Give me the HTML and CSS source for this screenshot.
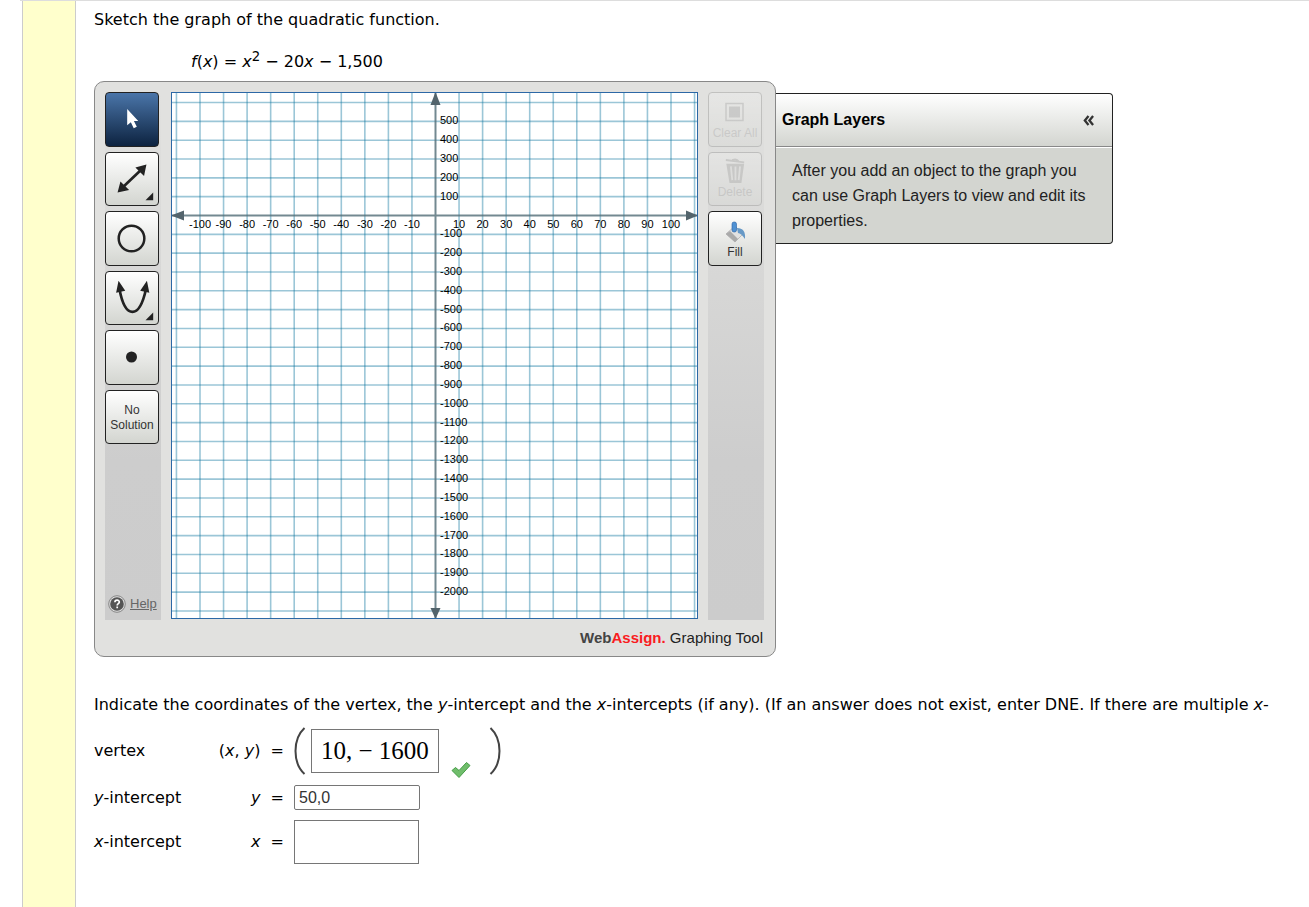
FILE: index.html
```
<!DOCTYPE html>
<html lang="en">
<head>
<meta charset="utf-8">
<title>Graphing question</title>
<link rel="stylesheet" href="styles.css">
</head>
<body>
<div class="page">
  <div class="margin-strip"></div>
  <main class="question">
    <p class="prompt">Sketch the graph of the quadratic function.</p>
    <p class="formula"><i>f</i>(<i>x</i>)&nbsp;=&nbsp;<i>x</i><sup>2</sup> − 20<i>x</i> − 1,500</p>

    <div class="workspace">
      <section class="tool">
        <div class="tool-main">
          <div class="rail">
            <div class="buttons buttons-left">
              <button class="btn btn-active" type="button" aria-label="Select">
                <svg viewBox="0 0 54 54"><path d="M22 16.500V33.500L25.800 30.300L28.800 36.600L32 35L29 29.200H33.500Z" fill="#fff"/></svg>
              </button>
              <button class="btn" type="button" aria-label="Line">
                <svg viewBox="0 0 54 54"><path d="M18 35L36 18" stroke="#222" stroke-width="2.800"/><path d="M12 41L15 29.500L24 38.500ZM42 12L30.500 15L39.500 24Z" fill="#222"/><path d="M49 41V49H41Z" fill="#222"/></svg>
              </button>
              <button class="btn" type="button" aria-label="Circle">
                <svg viewBox="0 0 54 54"><circle cx="26.500" cy="27.500" r="13.300" fill="none" stroke="#222" stroke-width="2.600"/></svg>
              </button>
              <button class="btn" type="button" aria-label="Parabola">
                <svg viewBox="0 0 54 54"><path d="M14 18C17 34 22 41.500 27.500 41.500S38 34 41.500 18" fill="none" stroke="#222" stroke-width="2.800"/><path d="M13 9L10.500 21.500L20 19.500ZM42.500 9L35.500 19.500L45 21.500Z" fill="#222"/><path d="M49 42V50H41Z" fill="#222"/></svg>
              </button>
              <button class="btn" type="button" aria-label="Point">
                <svg viewBox="0 0 54 54"><circle cx="26.500" cy="27" r="5.700" fill="#222"/></svg>
              </button>
              <button class="btn btn-text" type="button">No<br>Solution</button>
            </div>
            <a class="help" href="#help">
              <svg class="help-icon" viewBox="0 0 18 18"><circle cx="9" cy="9" r="8.300" fill="#ddd" stroke="#888"/><circle cx="9" cy="9" r="6.800" fill="#555"/><path d="M6.900 7.300C6.900 4.500 11.300 4.500 11.300 7.100C11.300 8.700 9.200 8.700 9.200 10.400M9.200 11.600V13.200" fill="none" stroke="#fff" stroke-width="1.700"/></svg>
              <span class="help-label">Help</span>
            </a>
          </div>
          <svg class="graph" id="graph" viewBox="0 0 527 527" role="img" aria-label="Coordinate grid"></svg>
          <div class="rail">
            <div class="buttons buttons-right">
              <button class="btn btn-stack" type="button" disabled>
                <svg class="small-icon" viewBox="0 0 24 24"><rect x="3" y="1.500" width="17" height="17" fill="none" stroke="#777" stroke-width="1.500"/><rect x="6" y="4.500" width="11" height="11" fill="#777"/></svg>
                Clear All
              </button>
              <button class="btn btn-stack" type="button" disabled>
                <svg class="bin-icon" viewBox="0 0 24 28"><path d="M2 2L22 4.500M9 2Q14 0 16 3.500" stroke="#777" stroke-width="2" fill="none"/><path d="M2.500 6H22L19 27H6Z" fill="#777"/><path d="M7.500 9L9 24M12.500 9V24M17.500 9L16 24" stroke="#ddd" stroke-width="2"/></svg>
                Delete
              </button>
              <button class="btn btn-stack" type="button">
                <svg class="small-icon" viewBox="0 0 24 24"><path d="M3 13L12 5L20 13L12 21Z" fill="#e2e2e2" stroke="#bbb"/><path d="M3 13L12 21L15 18L7 10Z" fill="#aaa"/><path d="M14 7Q23 7 22 18Q18 12 15 12Z" fill="#6799c6"/><rect x="9" y="1" width="4.500" height="10" rx="2" fill="#4f91d3" stroke="#2862a5" stroke-width=".6"/></svg>
                Fill
              </button>
            </div>
          </div>
        </div>
        <div class="brand"><b>Web<span class="brand-red">Assign.</span></b> Graphing Tool</div>
      </section>

      <aside class="layers">
        <header class="layers-head">
          <h2 class="layers-title">Graph Layers</h2>
          <button class="collapse" type="button" aria-label="Collapse">
            <svg class="collapse-icon" viewBox="0 0 12 12"><path d="M6 1L2 6L6 11M11 1L7 6L11 11" fill="none" stroke="#333" stroke-width="2.500"/></svg>
          </button>
        </header>
        <p class="layers-body">After you add an object to the graph you can use Graph Layers to view and edit its properties.</p>
      </aside>
    </div>

    <p class="instructions">Indicate the coordinates of the vertex, the <i>y</i>-intercept and the <i>x</i>-intercepts (if any). (If an answer does not exist, enter DNE. If there are multiple <i>x</i>-</p>

    <div class="answers">
      <label for="vertex">vertex</label>
      <span class="lhs">(<i>x</i>, <i>y</i>)&nbsp; =</span>
      <div class="vertex-answer">
        <svg class="paren" viewBox="0 0 12 48"><path d="M10.500 1C-1.500 12 -1.500 36 10.500 47" fill="none" stroke="#444" stroke-width="2"/></svg>
        <input class="field field-math" id="vertex" type="text" value="10, − 1600">
        <svg class="check" viewBox="0 0 20 16"><path d="M1 8.500L4.500 5.500L8 8.500L15.500 .5L19 3.500L8 15.500Z" fill="#70bd6b" stroke="#459c46"/></svg>
        <svg class="paren" viewBox="0 0 12 48"><path d="M1.500 1C13.500 12 13.500 36 1.500 47" fill="none" stroke="#444" stroke-width="2"/></svg>
      </div>

      <label for="yint"><i>y</i>-intercept</label>
      <span class="lhs"><i>y</i>&nbsp; =</span>
      <input class="field field-short" id="yint" type="text" value="50,0">

      <label for="xint"><i>x</i>-intercept</label>
      <span class="lhs"><i>x</i>&nbsp; =</span>
      <input class="field field-tall" id="xint" type="text">
    </div>
  </main>
</div>
<script src="graph.js"></script>
</body>
</html>
```
FILE: graph.js
```
const svg = document.getElementById("graph");
const NS = "http://www.w3.org/2000/svg";
const size = 527;
const origin = { x: 264.5, y: 123.5 };
const step = { x: 23.55, y: 18.83 };

function add(name, attrs, text) {
  const el = document.createElementNS(NS, name);
  for (const key in attrs) el.setAttribute(key, attrs[key]);
  if (text !== undefined) el.textContent = text;
  svg.appendChild(el);
}

for (let i = -11; i <= 11; i++) {
  const x = origin.x + i * step.x;
  if (i) add("path", { class: "grid", d: `M${x} 0V${size}` });
}
for (let j = -6; j <= 21; j++) {
  const y = origin.y + j * step.y;
  if (j) add("path", { class: "grid", d: `M0 ${y}H${size}` });
}

add("path", { class: "axis", d: `M0 ${origin.y}H${size}M${origin.x} 0V${size}` });
add("path", {
  class: "arrow",
  d: "M0 123.5L13 118.500V128.500ZM527 123.500L515 118.500V128.500ZM264.500 0L259.500 13H269.500ZM264.500 527L259.500 516H269.500Z"
});

for (let i = -10; i <= 10; i++) {
  if (i) add("text", { class: "tick tick-x", x: origin.x + i * step.x, y: 136 }, i * 10);
}
for (let j = -5; j <= 20; j++) {
  if (j) add("text", { class: "tick", x: 269, y: Math.floor(origin.y + j * step.y + 3.5) }, -j * 100);
}

add("rect", { class: "frame", x: 0.5, y: 0.5, width: size - 1, height: size - 1 });
```
FILE: styles.css
```
* { box-sizing: border-box; }

body {
  margin: 0;
  background: #fff;
  color: #000;
  font: 16px/20px Verdana, "DejaVu Sans", sans-serif;
  overflow: hidden;
}

p, h2 { margin: 0; }

.page {
  display: flex;
  min-height: 100vh;
  margin-left: 20px;
  padding-left: 2px;
  border-top: 1px solid #ddd;
}

.margin-strip {
  flex: none;
  width: 54px;
  background: #ffc;
  border: solid #ccc;
  border-width: 0 1px;
}

.question {
  flex: 1;
  min-width: 0;
  padding: 9px 0 0 18px;
}

.formula {
  margin: 22px 0 9px 97px;
}

.formula sup { line-height: 0; }

.workspace {
  display: flex;
  align-items: flex-start;
}

.tool {
  flex: none;
  padding: 10px 11px 0 10px;
  background: #e1e1df;
  border: 1px solid #888;
  border-radius: 10px;
}

.tool-main {
  display: flex;
  gap: 10px;
}

.rail {
  display: flex;
  flex-direction: column;
  justify-content: space-between;
  width: 56px;
  height: 528px;
  background: linear-gradient(#e1e1df, #cdcdcd 70%, #ccc);
}

.buttons {
  display: grid;
  grid-auto-rows: 1fr;
  gap: 5px;
  width: 54px;
}

.buttons-left { height: 352px; }
.buttons-right { height: 174px; }

.btn {
  padding: 0;
  min-height: 0;
  overflow: hidden;
  background: linear-gradient(#fff, #d3d5d0);
  border: 1px solid #222;
  border-radius: 4px;
  color: #333;
  font: 12px/15px "Liberation Sans", Arial, sans-serif;
}

.btn svg { display: block; width: 100%; }

.btn-active { background: linear-gradient(#4a75a9, #0d2340); }

.btn-text { padding-top: 2px; }

.btn-stack {
  display: flex;
  flex-direction: column;
  align-items: center;
  justify-content: flex-end;
  padding-bottom: 5px;
  white-space: nowrap;
}

.btn-stack .small-icon { width: 24px; height: 24px; }
.btn-stack .bin-icon { width: 22px; height: 28px; }

.btn:disabled {
  opacity: .2;
  color: #777;
  border-color: #444;
}

.help {
  display: flex;
  align-items: center;
  gap: 4px;
  padding: 0 0 7px 3px;
  color: #666;
  font: 13px/18px "Liberation Sans", Arial, sans-serif;
}

.help-icon { width: 18px; height: 18px; }

.graph {
  display: block;
  width: 527px;
  height: 527px;
  background: #fff;
}

.grid { stroke: #06719c; stroke-opacity: .4; stroke-width: 1.6px; }
.axis { stroke: #506b75; stroke-opacity: .8; stroke-width: 2px; }
.arrow { fill: #53646c; }
.frame { fill: none; stroke: #2c68a6; }
.tick { font: 11px "Liberation Sans", Arial, sans-serif; fill: #000; }
.tick-x { text-anchor: middle; }

.brand {
  padding: 8px 1px;
  color: #222;
  font: 15px/20px "Liberation Sans", Arial, sans-serif;
  text-align: right;
}

.brand b { color: #444; }
.brand .brand-red { color: #f91c22; }

.layers {
  width: 337px;
  margin-top: 12px;
  border: 1px solid #222;
  border-left: 0;
  border-radius: 0 4px 4px 0;
  background: #d3d5d0;
  font-family: "Liberation Sans", Arial, sans-serif;
}

.layers-head {
  display: flex;
  align-items: center;
  justify-content: space-between;
  height: 53px;
  padding: 0 17px 0 6px;
  background: linear-gradient(#fff, #d3d5d0);
  border-bottom: 1px solid #888;
  border-radius: 0 4px 0 0;
  box-shadow: 0 1px #fff;
}

.layers-title { font-size: 16px; }

.collapse {
  padding: 0;
  border: 0;
  background: none;
}

.collapse-icon { display: block; width: 13px; height: 11px; }

.layers-body {
  padding: 11px 16px 10px;
  color: #222;
  line-height: 25px;
}

.instructions {
  margin-top: 38px;
  white-space: nowrap;
}

.answers {
  display: grid;
  grid-template-columns: 100px 90px max-content;
  grid-template-rows: 48px 25px 44px;
  row-gap: 10px;
  align-items: center;
  margin-top: 12px;
}

.lhs { text-align: right; }

.answers > :nth-child(3n) { margin-left: 10px; }

.vertex-answer {
  display: flex;
  align-items: center;
  height: 48px;
}

.paren { width: 12px; height: 48px; }

.field {
  border: 1px solid #767676;
  background: #fff;
  color: #000;
}

.field-math {
  width: 128px;
  height: 44px;
  margin-left: 5px;
  padding: 0 9px;
  font: 25px "Liberation Serif", "Times New Roman", serif;
}

.check {
  align-self: flex-end;
  width: 20px;
  height: 16px;
  margin: 0 18px -3px 12px;
}

.field-short {
  width: 126px;
  height: 25px;
  padding: 0 4px;
  border-radius: 2px;
  color: #333;
  font: 16px "Liberation Sans", Arial, sans-serif;
}

.field-tall { width: 125px; height: 44px; }
```
